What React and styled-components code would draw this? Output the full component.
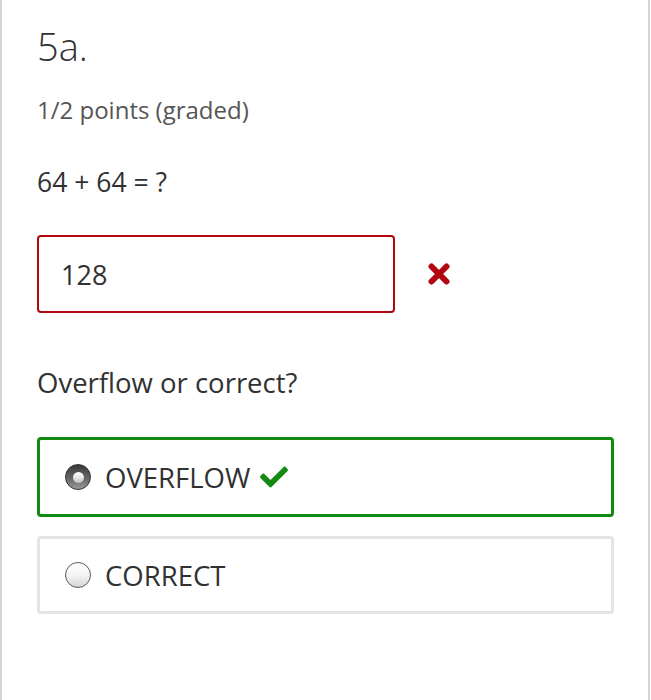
import React from 'react';
import styled, { createGlobalStyle } from 'styled-components';
import { FaCheck } from 'react-icons/fa';

const GlobalStyle = createGlobalStyle`
    html, body {
        margin: 0;
        padding: 0;
        background: #ffffff;
    }
    body {
        font-family: "Open Sans", "DejaVu Sans", sans-serif;
        color: #313131;
    }
`;

const Page = styled.div`
    min-height: 700px;
    box-sizing: border-box;
    border-left: 2px solid #d4d4d4;
    border-right: 2px solid #d4d4d4;
    width: 650px;
    padding: 22px 0 0 35px;
`;

const Title = styled.h2`
    margin: 0;
    font-size: 38px;
    font-weight: 300;
    line-height: 48px;
    color: #313131;
`;

const Points = styled.div`
    margin-top: 25px;
    font-size: 24px;
    line-height: 30px;
    color: #555555;
`;

const Prompt = styled.p`
    margin: ${(p) => p.$top}px 0 0 0;
    font-size: ${(p) => p.$size}px;
    line-height: 34px;
    color: #313131;
`;

const InputRow = styled.div`
    display: flex;
    align-items: center;
    margin-top: 36px;
`;

const AnswerBox = styled.div`
    box-sizing: border-box;
    width: 358px;
    height: 78px;
    border: 2px solid #b20610;
    border-radius: 4px;
    display: flex;
    align-items: center;
    padding-left: 22px;
    font-size: 27px;
    color: #313131;
`;

const Status = styled.span`
    display: flex;
    margin-left: 33px;
    color: ${(p) => p.$color};
`;

const Choices = styled.div`
    display: flex;
    flex-direction: column;
    gap: 19px;
    margin-top: 37px;
    width: 577px;
`;

const Choice = styled.label`
    box-sizing: border-box;
    height: ${(p) => p.$h}px;
    border: 3px solid ${(p) => (p.$correct ? '#128a12' : '#e4e4e4')};
    border-radius: 4px;
    display: flex;
    align-items: center;
    padding-left: 25px;
    font-size: 27.5px;
    color: #313131;
`;

const Radio = styled.span`
    box-sizing: border-box;
    width: 26px;
    height: 26px;
    border-radius: 50%;
    margin-right: 14px;
    flex-shrink: 0;
    display: flex;
    align-items: center;
    justify-content: center;
    border: ${(p) => (p.$checked ? '1px solid #2e2e2e' : '1.5px solid #5a5a5a')};
    background: ${(p) =>
        p.$checked
            ? 'linear-gradient(180deg, #3a3a3a 0%, #6a6a6a 60%, #9a9a9a 100%)'
            : 'linear-gradient(180deg, #ffffff 0%, #f4f4f4 50%, #d6d6d6 100%)'};
    &::after {
        content: '';
        display: ${(p) => (p.$checked ? 'block' : 'none')};
        width: 11px;
        height: 11px;
        border-radius: 50%;
        background: linear-gradient(180deg, #ffffff 0%, #e8e8e8 50%, #bdbdbd 100%);
    }
`;

const Mark = styled.span`
    display: flex;
    margin-left: 10px;
    color: #128a12;
`;

const CrossIcon = () => (
    <svg width="22" height="22" viewBox="0 0 22 22">
        <path
            d="M3.5 3.5 L18.5 18.5 M18.5 3.5 L3.5 18.5"
            stroke="currentColor"
            strokeWidth="6"
            strokeLinecap="round"
            fill="none"
        />
    </svg>
);

const App = () => {
    return (
        <>
            <GlobalStyle />
            <Page>
                <Title>5a.</Title>
                <Points>1/2 points (graded)</Points>
                <Prompt $top={40} $size={26.5}>64 + 64 = ?</Prompt>
                <InputRow>
                    <AnswerBox>128</AnswerBox>
                    <Status $color="#b20610">
                        <CrossIcon />
                    </Status>
                </InputRow>
                <Prompt $top={53} $size={27.5}>Overflow or correct?</Prompt>
                <Choices>
                    <Choice $correct $h={80}>
                        <Radio $checked />
                        OVERFLOW
                        <Mark>
                            <FaCheck size={28} />
                        </Mark>
                    </Choice>
                    <Choice $h={78}>
                        <Radio />
                        CORRECT
                    </Choice>
                </Choices>
            </Page>
        </>
    );
};

export default App;
